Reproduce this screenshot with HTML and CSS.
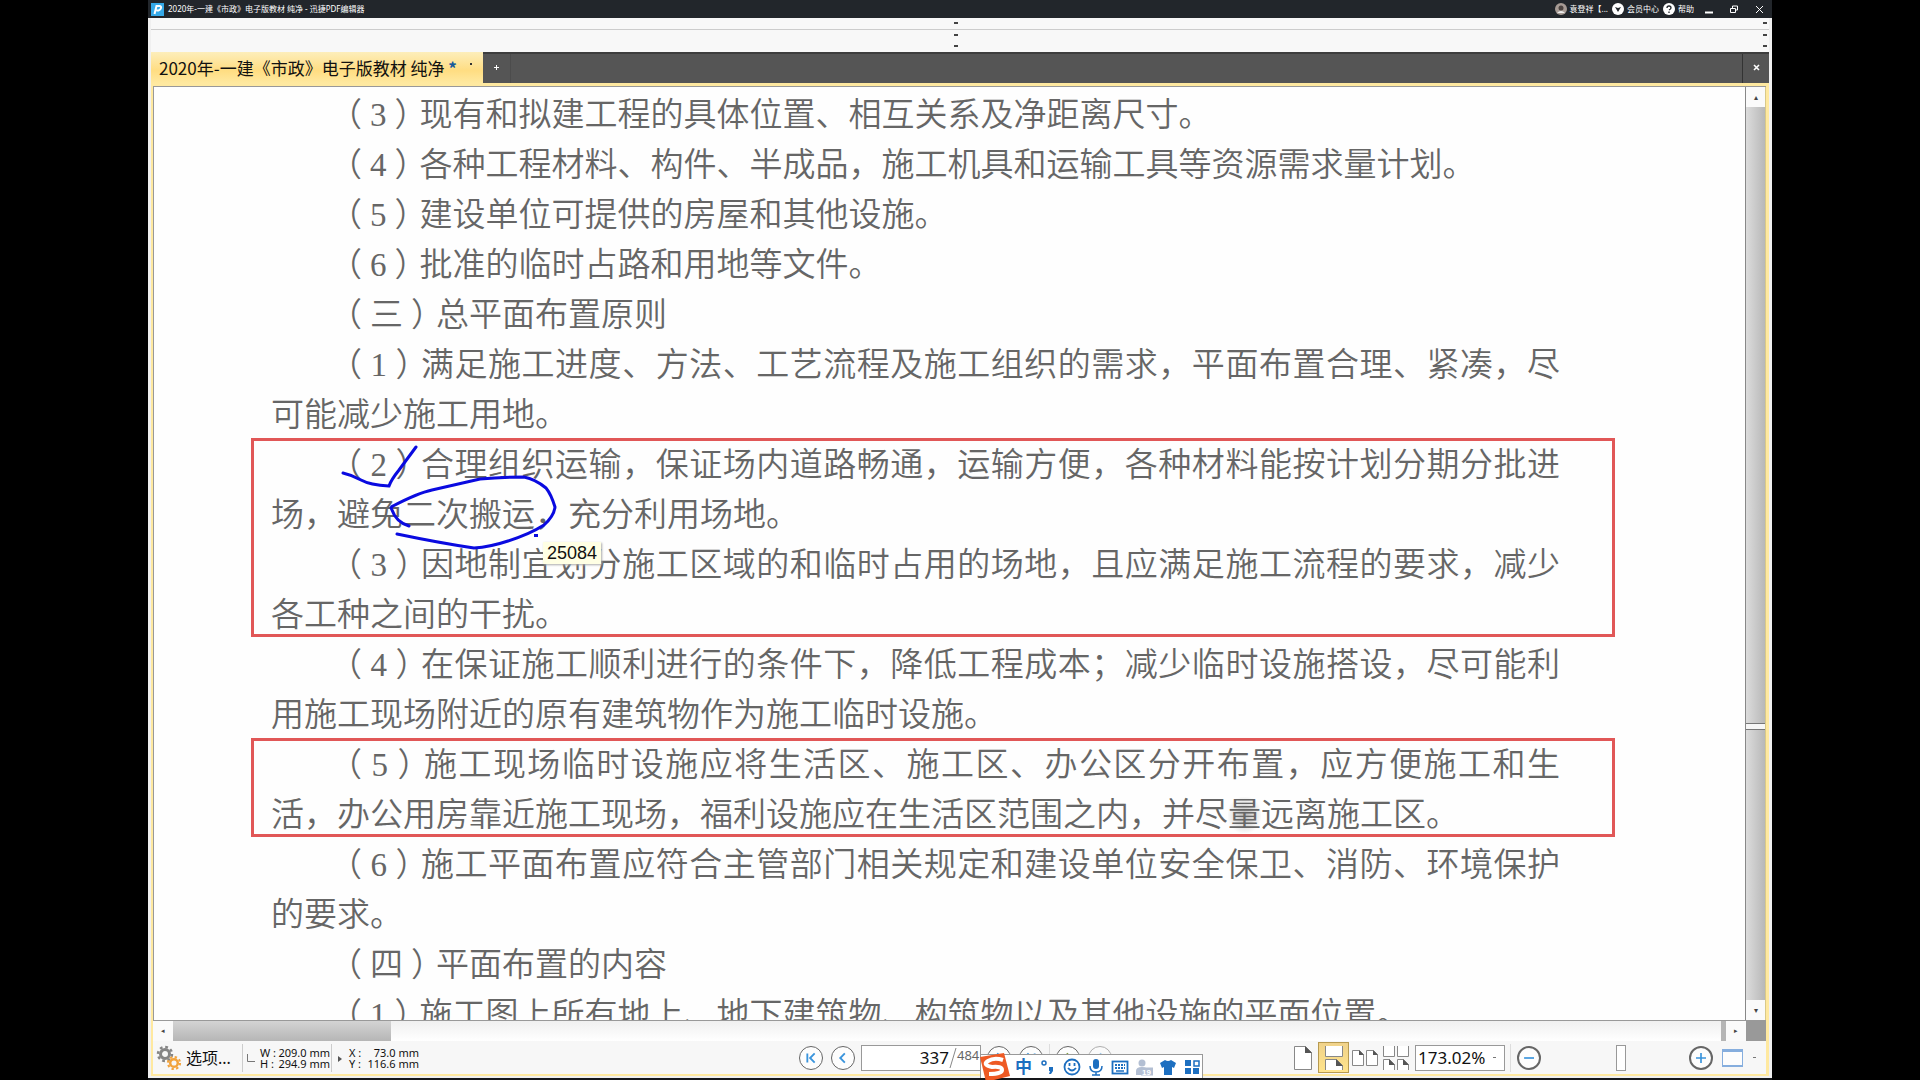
FILE: index.html
```html
<!DOCTYPE html>
<html lang="zh-CN">
<head>
<meta charset="utf-8">
<title>2020年-一建《市政》电子版教材 纯净 - 迅捷PDF编辑器</title>
<link rel="stylesheet" href="styles.css">
</head>
<body>
<div class="window">
  <header class="titlebar">
    <svg class="logo" viewBox="0 0 13 13"><rect width="13" height="13" fill="#35a9e8"/><path d="M3.500 11L5.500 3H8.500Q10.500 3 10 5T7.500 7.500H5.500" fill="none" stroke="#fff" stroke-width="2"/></svg>
    <span class="title">2020年-一建《市政》电子版教材 纯净 - 迅捷PDF编辑器</span>
    <button class="user"><svg viewBox="0 0 12 12"><circle cx="6" cy="6" r="6" fill="#a69a94"/><circle cx="6" cy="5" r="2.500" fill="#4b423f"/><path d="M2 10q4-4 8 0" fill="#eee"/></svg>袁登祥【...</button>
    <button class="user"><svg viewBox="0 0 12 12"><circle cx="6" cy="6" r="6" fill="#fff"/><path d="M3 4l3 5 3-5-3 1z" fill="#22262b"/></svg>会员中心</button>
    <button class="user"><svg viewBox="0 0 12 12"><circle cx="6" cy="6" r="6" fill="#fff"/><path d="M4 5Q4 3 6 3T8 5Q8 6 6 7M6 8.500v1.500" fill="none" stroke="#22262b" stroke-width="1.300"/></svg>帮助</button>
    <div class="wincontrols">
      <button aria-label="最小化"><svg viewBox="0 0 10 10"><path d="M1 8.500h8" stroke="#fff" stroke-width="2"/></svg></button>
      <button aria-label="还原"><svg viewBox="0 0 10 10"><path d="M1.500 4.500h5v4h-5zM3.500 4V2h5v4H7" fill="none" stroke="#fff"/></svg></button>
      <button aria-label="关闭"><svg viewBox="0 0 10 10"><path d="M2 2l7 7M9 2l-7 7" stroke="#fff"/></svg></button>
    </div>
  </header>
  <div class="ribbon">
    <div class="ribbon-row first"><i></i><i></i></div>
    <div class="ribbon-row"><i></i><i></i></div>
    <div class="ribbon-row"><i></i><i></i></div>
  </div>
  <nav class="tabs">
    <button class="tab">2020年-一建《市政》电子版教材 纯净 <b>*</b><span class="tabdot"></span></button>
    <button class="newtab" aria-label="新建标签"><svg viewBox="0 0 7 7"><path d="M1 3.500h5M3.500 1v5" stroke="#fff"/></svg></button>
    <button class="closetab" aria-label="关闭标签"><svg viewBox="0 0 7 7"><path d="M1 1l5 5M6 1l-5 5" stroke="#fff" stroke-width="1.600"/></svg></button>
  </nav>
  <div class="frame">
    <div class="viewer">
      <main class="page">
        <p class="in"><span class="num">（<i>3</i>）</span>现有和拟建工程的具体位置、相互关系及净距离尺寸。</p>
        <p class="in"><span class="num">（<i>4</i>）</span>各种工程材料、构件、半成品，施工机具和运输工具等资源需求量计划。</p>
        <p class="in"><span class="num">（<i>5</i>）</span>建设单位可提供的房屋和其他设施。</p>
        <p class="in"><span class="num">（<i>6</i>）</span>批准的临时占路和用地等文件。</p>
        <p class="in"><span class="num">（<i>三</i>）</span>总平面布置原则</p>
        <p class="in full"><span class="num">（<i>1</i>）</span>满足施工进度、方法、工艺流程及施工组织的需求，平面布置合理、紧凑，尽</p>
        <p>可能减少施工用地。</p>
        <section class="marked">
          <p class="in full"><span class="num">（<i>2</i>）</span>合理组织运输，保证场内道路畅通，运输方便，各种材料能按计划分期分批进</p>
          <p>场，避免二次搬运，充分利用场地。</p>
          <p class="in full"><span class="num">（<i>3</i>）</span>因地制宜划分施工区域的和临时占用的场地，且应满足施工流程的要求，减少</p>
          <p>各工种之间的干扰。</p>
        </section>
        <p class="in full"><span class="num">（<i>4</i>）</span>在保证施工顺利进行的条件下，降低工程成本；减少临时设施搭设，尽可能利</p>
        <p>用施工现场附近的原有建筑物作为施工临时设施。</p>
        <section class="marked">
          <p class="in full"><span class="num">（<i>5</i>）</span>施工现场临时设施应将生活区、施工区、办公区分开布置，应方便施工和生</p>
          <p>活，办公用房靠近施工现场，福利设施应在生活区范围之内，并尽<span class="smudge">量</span>远离施工区。</p>
        </section>
        <p class="in full"><span class="num">（<i>6</i>）</span>施工平面布置应符合主管部门相关规定和建设单位安全保卫、消防、环境保护</p>
        <p>的要求。</p>
        <p class="in"><span class="num">（<i>四</i>）</span>平面布置的内容</p>
        <p class="in"><span class="num">（<i>1</i>）</span>施工图上所有地上、地下建筑物、构筑物以及其他设施的平面位置。</p>
        <svg class="ink" viewBox="154 87 460 560"><path d="M343 473Q352 475 361 480T389 486Q391 480 399 470L416 447M409 526Q396 522 392 510Q390 507 393 506Q418 493 432 490L480 479Q500 477 524 477Q535 479 546 488Q551 494 555 507Q554 516 544 525Q530 534 508 541Q490 547 474 548Q440 543 397 534"/><rect x="534" y="534" width="4" height="3"/></svg>
        <div class="tip">25084</div>
      </main>
      <div class="vscroll"><button aria-label="向上">▴</button><div class="vtrack"><span></span></div><button aria-label="向下">▾</button></div>
    </div>
    <div class="hscroll"><button aria-label="向左">◂</button><span class="hthumb"></span><span class="htrack"></span><button aria-label="向右">▸</button><span class="corner"></span></div>
    <footer class="status">
      <button class="options"><svg viewBox="0 0 26 26"><g fill="none"><circle cx="9" cy="9" r="4.500" stroke="#858585" stroke-width="3"/><circle cx="9" cy="9" r="7" stroke="#858585" stroke-width="2.500" stroke-dasharray="2.750"/><circle cx="18" cy="18" r="3.800" stroke="#f2a33c" stroke-width="2.500"/><circle cx="18" cy="18" r="6" stroke="#f2a33c" stroke-width="2.200" stroke-dasharray="2.350"/></g></svg>选项...</button>
      <div class="metric"><svg viewBox="0 0 10 10"><path d="M1.500 1v7.500H9" fill="none" stroke="#777"/></svg><table><tr><th>W :</th><td>209.0 mm</td></tr><tr><th>H :</th><td>294.9 mm</td></tr></table></div>
      <div class="metric last"><svg viewBox="0 0 10 10"><path d="M3 3l4 3-4 3z" fill="#555"/></svg><table><tr><th>X :</th><td>73.0 mm</td></tr><tr><th>Y :</th><td>116.6 mm</td></tr></table></div>
      <div class="pager">
        <button class="round" aria-label="首页"><svg viewBox="0 0 24 24"><path d="M8 7v10M16 7l-5 5 5 5"/></svg></button>
        <button class="round" aria-label="上一页"><svg viewBox="0 0 24 24"><path d="M14 7l-5 5 5 5"/></svg></button>
        <div class="pagebox"><input aria-label="页码" value="337"><svg viewBox="0 0 8 24"><path d="M7 2L1 22" stroke="#888"/></svg><span>484</span></div>
        <button class="round" aria-label="下一页"><svg viewBox="0 0 24 24"><path d="M10 7l5 5-5 5"/></svg></button>
        <button class="round" aria-label="末页"><svg viewBox="0 0 24 24"><path d="M8 7l5 5-5 5M16 7v10"/></svg></button>
        <span class="sep"></span>
        <button class="round" aria-label="后退"><svg viewBox="0 0 24 24"><path class="green" d="M17 12H8M12 7l-5 5 5 5"/></svg></button>
        <button class="round dim" aria-label="前进"><svg viewBox="0 0 24 24"><path d="M7 12h9M12 7l5 5-5 5"/></svg></button>
      </div>
      <div class="views">
        <button class="view" aria-label="单页"><svg width="18" height="24"><path d="M.5.500h11l6 6v17H.5z"/><path class="fold" d="M11 0v7h7z"/></svg></button>
        <button class="view on" aria-label="连续"><svg width="18" height="24"><path d="M.5 0v10.500h17V0M.5 24V13.500h11l6 6V24"/><path class="fold" d="M11 13v7h7z"/></svg></button>
        <button class="view" aria-label="双页"><svg width="26" height="24"><path d="M.5 4.500h7l4 4v11H.5zM14.500 4.500h7l4 4v11h-11z"/><path class="fold" d="M7 4v5h5zM21 4v5h5z"/></svg></button>
        <button class="view" aria-label="双页连续"><svg width="26" height="24"><path d="M.5 0v10.500h11V0M14.500 0v10.500h11V0M.5 24V13.500h6l5 5V24M14.500 24V13.500h6l5 5V24"/><path class="fold" d="M6 13v6h6zM20 13v6h6z"/></svg></button>
        <div class="zoom"><select aria-label="缩放"><option>173.02%</option></select><i></i></div>
        <span class="sep"></span>
        <button class="round thick" aria-label="缩小"><svg viewBox="0 0 24 24"><path d="M6 12h12"/></svg></button>
        <input class="slider" type="range" min="0" max="100" value="54" aria-label="缩放比例">
        <button class="round thick" aria-label="放大"><svg viewBox="0 0 24 24"><path d="M6 12h12M12 6v12"/></svg></button>
        <button class="fit" aria-label="适合宽度"></button>
        <i class="more"></i>
      </div>
    </footer>
  </div>
  <div class="ime">
    <svg class="sogou" viewBox="0 0 32 30"><path d="M1 5L25 1l6 23-24 6z" fill="#ee5a24"/><path d="M24 8Q15 5 9 9T13 15Q23 14 23 18T10 22" fill="none" stroke="#fff" stroke-width="4"/></svg>
    <b class="zh">中</b>
    <svg viewBox="0 0 18 18"><circle cx="5" cy="5" r="2" fill="none" stroke="#1d6fc0" stroke-width="1.500"/><path d="M10 9h4v4l-2 3h-2l1-3h-1z" fill="#1d6fc0"/></svg>
    <svg viewBox="0 0 18 18"><g fill="none" stroke="#1d6fc0" stroke-width="1.800"><circle cx="9" cy="9" r="7.500"/><path d="M5 10q4 5 8 0M6.500 5v3M11.500 5v3"/></g></svg>
    <svg viewBox="0 0 18 18"><rect x="6" y="1" width="6" height="10" rx="3" fill="#1d6fc0"/><path d="M3 8q0 6 6 6t6-6M9 14v3M5 17h8" fill="none" stroke="#1d6fc0" stroke-width="1.500"/></svg>
    <svg viewBox="0 0 18 18"><rect x="1.500" y="3.500" width="15" height="12" fill="none" stroke="#1d6fc0" stroke-width="1.800"/><path d="M4 7h10M4 10h10" stroke="#1d6fc0" stroke-width="1.800" stroke-dasharray="2 1"/><path d="M5 13h8" stroke="#1d6fc0" stroke-width="1.500"/></svg>
    <svg viewBox="0 0 18 18"><circle cx="7" cy="5" r="3.500" fill="#b3bfd3"/><path d="M1 17v-4q0-4 6-4 4 0 5 2v6z" fill="#b3bfd3"/><rect x="6" y="9.500" width="12" height="8" fill="#b3bfd3"/><text x="7" y="17" class="badge">19</text></svg>
    <svg viewBox="0 0 18 18"><path d="M6 2q3 2 6 0l5 3-2 5-2-1v8H5V9l-2 1-2-5z" fill="#1d6fc0"/></svg>
    <svg viewBox="0 0 18 18"><path d="M2 2h6v6H2zM2 10h6v6H2zM10 10h6v6h-6z" fill="#1d6fc0"/><path d="M11 3h5v5h-5z" fill="none" stroke="#1d6fc0" stroke-width="1.500"/></svg>
  </div>
</div>
</body>
</html>
```
FILE: styles.css
```css
* { box-sizing: border-box; }
body { margin: 0; background: #000; font-family: "Noto Sans", "Noto Sans CJK SC", sans-serif; }
button, input, select { font: inherit; color: inherit; margin: 0; padding: 0; border: 0; background: none; border-radius: 0; }
p { margin: 0; }
.window { position: relative; display: flex; flex-direction: column; height: 100vh; margin: 0 148px; background: #f0f0f0; border-bottom: 2px solid #15171a; }

.titlebar { flex: none; display: flex; align-items: center; height: 18px; padding: 0 8px 0 3px; background: #22262b; color: #fff; font-size: 8px; line-height: 18px; }
.logo { width: 13px; height: 13px; margin-right: 4px; }
.title { flex: 1; }
.user { display: flex; align-items: center; gap: 3px; margin-right: 4px; line-height: 18px; }
.user svg { width: 12px; height: 12px; }
.wincontrols { display: flex; gap: 15px; margin-left: 6px; }
.wincontrols button { display: flex; }
.wincontrols svg { width: 10px; height: 10px; }

.ribbon { flex: none; margin: 0 3px; background: #f8f8f8; }
.ribbon-row { display: flex; justify-content: space-between; height: 11px; padding: 4px 2px 0 calc(50% - 6px); }
.ribbon .first { height: 12px; border-bottom: 1px solid #ccc; }
.ribbon i { width: 4px; height: 2px; background: #444; }

.tabs { flex: none; display: flex; height: 31px; margin: 0 3px; background: #555; border-top: 2px solid #3d3d3d; color: #fff; }
.tab { position: relative; width: 332px; margin-top: -2px; padding-left: 8px; text-align: left; white-space: nowrap; font: 17px/30px "Noto Sans CJK SC", sans-serif; color: #111; background: linear-gradient(#fdeebb, #ffdd82 60%, #ffe9a0); }
.tab b { color: #175a9c; }
.tabdot { position: absolute; right: 11px; top: 11px; width: 2px; height: 2px; background: #333; }
.newtab, .closetab { display: flex; align-items: center; justify-content: center; padding-bottom: 2px; }
.newtab { width: 28px; border-right: 1px solid #4c4c4c; }
.closetab { width: 27px; margin-left: auto; border-left: 1px solid #333; }
.tabs svg { width: 7px; height: 7px; }

.frame { flex: 1; min-height: 0; display: flex; flex-direction: column; margin: 0 3px 2px; border: 2px solid #ffe9a0; border-top-width: 3px; border-right-width: 3px; }
.viewer { flex: 1; min-height: 0; display: flex; border: 1px solid #999; border-right: 0; }
.page { position: relative; flex: 1; overflow: hidden; padding: 3px 185px 0 117px; background: #fefefe; color: #666; font: 350 33px/50px "Liberation Serif", "Noto Sans CJK SC", serif; white-space: nowrap; text-spacing-trim: space-all; }
.page p { height: 50px; }
.in { padding-left: 66px; }
.num { margin: 0 -8px; }
.num i { margin: 0 8px; font-style: normal; }
.full { text-align: justify; text-align-last: justify; }
.marked { position: relative; }
.marked::after { content: ""; position: absolute; inset: -2px -55px 3px -20px; border: 3px solid #e15757; }
.smudge { background: radial-gradient(#bbb, transparent 75%); }
.ink { position: absolute; left: 0; top: 0; width: 460px; height: 560px; fill: none; stroke: #0a0ae0; stroke-width: 3; stroke-linecap: round; }
.ink rect { fill: #0a0ae0; stroke: none; }
.tip { position: absolute; left: 389px; top: 455px; padding: 0 4px; background: #ffffe4; color: #111; font: 400 18px/22px "Liberation Sans", sans-serif; box-shadow: 1px 1px 2px #aaa; }

.vscroll { flex: none; display: flex; flex-direction: column; width: 21px; border-left: 1px solid #888; border-right: 1px solid #d8c98a; }
.vscroll button { height: 20px; background: #fafafa; font-size: 8px; line-height: 20px; color: #444; }
.vtrack { flex: 1; padding-top: 616px; background: linear-gradient(90deg, #dcdcdc, #b8b8b8); }
.vtrack span { display: block; height: 7px; background: #f6f6f6; border: solid #777; border-width: 1px 0; }
.hscroll { flex: none; display: flex; height: 20px; background: linear-gradient(#f0f0f0, #fff); }
.hscroll button { width: 20px; background: #fafafa; font-size: 7px; line-height: 18px; color: #444; }
.hthumb { width: 218px; background: linear-gradient(#d4d4d4, #b6b6b6); }
.htrack { flex: 1; border-right: 5px solid #b5b5b5; }
.corner { width: 20px; background: #999; }

.status { flex: none; display: flex; align-items: center; height: 33px; padding: 0 10px 0 3px; background: #f7f7f7; color: #111; }
.options { display: flex; align-items: center; gap: 4px; width: 87px; height: 28px; border-right: 1px solid #ccc; font-size: 16px; line-height: 28px; }
.options svg { width: 26px; height: 26px; }
.metric { display: flex; align-items: center; gap: 4px; width: 89px; height: 28px; padding-left: 3px; border-right: 1px solid #ccc; font-size: 11px; line-height: 11px; white-space: nowrap; }
.metric.last { border: 0; }
.metric svg { width: 10px; height: 10px; }
.metric table { border-spacing: 0; width: 70px; }
.metric th, .metric td { padding: 0; font-weight: 400; text-align: left; }
.metric td { text-align: right; }
.pager { display: flex; align-items: center; gap: 8px; margin-left: 378px; }
.round { flex: none; width: 24px; height: 24px; border: 1px solid #666; border-radius: 50%; background: #fdfdfd; }
.round svg { display: block; width: 22px; height: 22px; fill: none; stroke: #3a94dc; stroke-width: 2; }
.round .green { stroke: #7a9a3a; }
.dim { opacity: .5; }
.thick { border-width: 2px; }
.thick svg { width: 20px; height: 20px; }
.pagebox { display: flex; width: 120px; height: 26px; margin: 0 -2px; border: 1px solid #999; background: #fff; }
.pagebox input { width: 87px; text-align: right; font-size: 17px; }
.pagebox svg { width: 8px; height: 24px; }
.pagebox span { font-size: 13px; line-height: 18px; color: #666; }
.sep { flex: none; width: 1px; height: 28px; background: #ddd; }
.pager .sep { margin: 0 -2px; }
.views { display: flex; align-items: center; margin-left: auto; }
.view { display: flex; align-items: center; justify-content: center; width: 31px; height: 31px; }
.view svg { fill: #fff; stroke: #888; }
.view .fold { fill: #555; stroke: none; }
.on { background: linear-gradient(#f0d28a, #ffe48c); border: 1px solid #b79a50; }
.zoom { display: flex; align-items: center; width: 90px; height: 26px; margin: 0 5px 0 4px; padding-right: 8px; border: 1px solid #999; background: #fff; }
.zoom select { flex: 1; appearance: none; height: 24px; padding-left: 2px; font-size: 17px; line-height: 24px; }
.zoom i, .more { width: 3px; height: 1px; background: #777; }
.more { margin-left: 10px; }
.views .sep { margin-right: 6px; }
.slider { appearance: none; width: 148px; height: 26px; }
.slider::-webkit-slider-thumb { appearance: none; width: 10px; height: 26px; border: 1px solid #999; background: #fff; }
.fit { width: 21px; height: 18px; margin-left: 9px; border: solid #86aede; border-width: 3px 1px 2px; background: #fdfdfd; }

.ime { position: absolute; left: 832px; bottom: 0; display: flex; align-items: center; gap: 6px; height: 24px; padding-right: 1px; background: #fff; border: 1px solid #999; border-bottom: 0; }
.ime svg { width: 18px; height: 18px; }
.ime .sogou { width: 32px; height: 30px; margin: 0 -2px 0 -2px; }
.zh { width: 18px; font-size: 17px; line-height: 22px; color: #1d6fc0; }
.badge { font: 700 8px "Liberation Sans", sans-serif; fill: #fff; }
```
